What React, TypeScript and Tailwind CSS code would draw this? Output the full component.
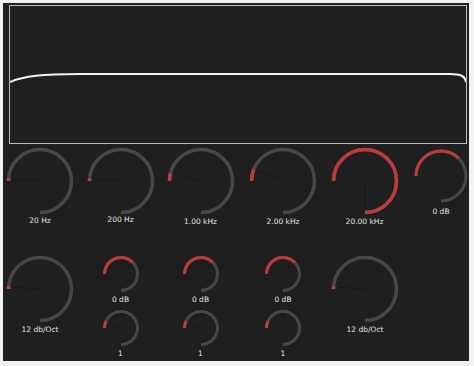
import React from "react";

function pt(cx: number, cy: number, r: number, deg: number) {
  const a = (deg * Math.PI) / 180;
  return [cx + r * Math.cos(a), cy + r * Math.sin(a)];
}

function arc(cx: number, cy: number, r: number, s: number, e: number) {
  const [x1, y1] = pt(cx, cy, r, s);
  const [x2, y2] = pt(cx, cy, r, e);
  const large = e - s > 180 ? 1 : 0;
  return `M${x1.toFixed(2)},${y1.toFixed(2)} A${r},${r} 0 ${large} 1 ${x2.toFixed(2)},${y2.toFixed(2)}`;
}

type KnobProps = { size: number; r: number; sw: number; v: number; label: string; labelClass?: string };

function Knob({ size, r, sw, v, label, labelClass = "" }: KnobProps) {
  const c = size / 2;
  const end = 180 + Math.max(5, 270 * v);
  const ang = 180 + 270 * v;
  const [px, py] = pt(c, c, r - sw, ang);
  return (
    <div className="flex flex-col items-center">
      <svg width={size} height={size} viewBox={`0 0 ${size} ${size}`} className="block">
        <path d={arc(c, c, r, 180, 450)} fill="none" stroke="#474747" strokeWidth={sw} />
        <path d={arc(c, c, r, 180, end)} fill="none" stroke="#bd3b3b" strokeWidth={sw} />
        <line x1={c} y1={c} x2={px} y2={py} stroke="#181818" strokeWidth={1} />
      </svg>
      <div
        className={`text-[7.5px] leading-[11px] text-[#e4e4e4] whitespace-nowrap ${labelClass}`}
        style={{ fontFamily: '"DejaVu Sans", Verdana, sans-serif' }}
      >
        {label}
      </div>
    </div>
  );
}

const Big = (p: { v: number; label: string; labelClass?: string }) => (
  <Knob size={70} r={31.5} sw={3.5} v={p.v} label={p.label} labelClass={p.labelClass} />
);
const Small = (p: { v: number; label: string; labelClass?: string }) => (
  <Knob size={40} r={16.5} sw={3} v={p.v} label={p.label} labelClass={p.labelClass} />
);

export default function App() {
  return (
    <div className="min-h-screen w-full bg-[#f2f2f2] pt-[3px] pl-[3px]">
      <div className="w-[466px] h-[358px] bg-[#1f1f1f] flex flex-col">
        <div className="ml-[6px] mt-[2px] w-[458px] h-[139px] border border-[#bdbdbd]">
          <svg width={456} height={137} viewBox="0 0 456 137" className="block">
            <path
              d="M0,76 C14,70 32,68.2 70,68 L440,68 C451,68 455,70 456,76"
              fill="none"
              stroke="#f4f4f4"
              strokeWidth={2}
            />
          </svg>
        </div>

        <div className="flex items-start mt-[2px]">
          <div className="ml-[2px]">
            <Big v={0.015} label="20 Hz" labelClass="-mt-[1.5px]" />
          </div>
          <div className="ml-[10.5px]">
            <Big v={0.015} label="200 Hz" labelClass="-mt-[2.5px]" />
          </div>
          <div className="ml-[10px]">
            <Big v={0.05} label="1.00 kHz" />
          </div>
          <div className="ml-[12.5px]">
            <Big v={0.08} label="2.00 kHz" />
          </div>
          <div className="ml-[11.5px]">
            <Big v={1} label="20.00 kHz" />
          </div>
          <div className="ml-[12.5px] mt-[1px]">
            <Knob size={58} r={25} sw={3} v={0.5} label="0 dB" labelClass="mt-[1px]" />
          </div>
        </div>

        <div className="flex items-start mt-[26.5px]">
          <div className="ml-[2px]">
            <Big v={0.015} label="12 db/Oct" />
          </div>
          <div className="ml-[25.5px] flex flex-col">
            <Small v={0.5} label="0 dB" />
            <div className="mt-[3.5px]">
              <Small v={0.09} label="1" />
            </div>
          </div>
          <div className="ml-[40px] flex flex-col">
            <Small v={0.5} label="0 dB" />
            <div className="mt-[3.5px]">
              <Small v={0.09} label="1" />
            </div>
          </div>
          <div className="ml-[42.5px] flex flex-col">
            <Small v={0.5} label="0 dB" />
            <div className="mt-[3.5px]">
              <Small v={0.09} label="1" />
            </div>
          </div>
          <div className="ml-[27px]">
            <Big v={0.015} label="12 db/Oct" />
          </div>
        </div>
      </div>
    </div>
  );
}
